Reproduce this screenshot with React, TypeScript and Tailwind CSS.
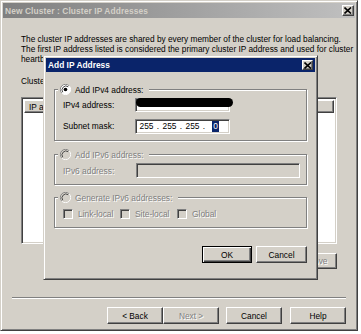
const raised =
  'border border-t-white border-l-white border-r-[#404040] border-b-[#404040] shadow-[inset_-1px_-1px_0_#808080]';
const sunken =
  'border border-t-[#808080] border-l-[#808080] border-r-white border-b-white shadow-[inset_1px_1px_0_#404040,inset_-1px_-1px_0_#d4d0c8]';
const etched = 'border border-[#808080] shadow-[inset_1px_1px_0_#fff,1px_1px_0_#fff]';
const disabledText = 'text-[#808080] [text-shadow:1px_1px_0_#fff]';

function CloseBtn({ className }: { className: string }) {
  return (
    <div className={`${raised} bg-[#d4d0c8] flex items-center justify-center ${className}`}>
      <svg width="8" height="7" viewBox="0 0 8 7">
        <path d="M0.5 0.5 L7 6.5 M7 0.5 L0.5 6.5" stroke="#000" strokeWidth="1.6" />
      </svg>
    </div>
  );
}

function Radio({ checked, disabled }: { checked?: boolean; disabled?: boolean }) {
  return (
    <svg width="11" height="11" viewBox="0 0 12 12" className="shrink-0">
      <circle cx="6" cy="6" r="5.5" fill={disabled ? '#d4d0c8' : '#fff'} />
      <path d="M10 2 A5.5 5.5 0 0 0 2 10" stroke="#808080" strokeWidth="1" fill="none" />
      <path d="M9 3 A4.3 4.3 0 0 0 3 9" stroke="#404040" strokeWidth="1" fill="none" />
      <path d="M2 10 A5.5 5.5 0 0 0 10 2" stroke="#fff" strokeWidth="1" fill="none" />
      {checked && <circle cx="6" cy="6" r="2" fill="#000" />}
    </svg>
  );
}

function Check({ label }: { label: string }) {
  return (
    <div className="w-[57px] flex items-center gap-[5px]">
      <div className={`${sunken} w-[10px] h-[10px] bg-[#d4d0c8] shrink-0`} />
      <span className={disabledText}>{label}</span>
    </div>
  );
}

function Legend({ children, checked, disabled }: { children: string; checked?: boolean; disabled?: boolean }) {
  return (
    <div className="absolute left-[3px] top-[-6px] h-[11px] pl-[2px] pr-[6px] bg-[#d4d0c8] flex items-center gap-[4px]">
      <Radio checked={checked} disabled={disabled} />
      <span className={disabled ? disabledText : 'text-black'}>{children}</span>
    </div>
  );
}

export default function App() {
  return (
    <div className="w-[361px] h-[334px] bg-white font-['Liberation_Sans',Arial,sans-serif] text-[8.3px] leading-[10px] text-black">
      {/* Wizard window */}
      <div className="relative w-[358px] h-[331px] bg-[#d4d0c8] border border-t-[#d4d0c8] border-l-[#d4d0c8] border-r-[#404040] border-b-[#404040] shadow-[inset_1px_1px_0_#fff,inset_-1px_-1px_0_#808080] p-[2px] flex flex-col">
        <div className="h-[15px] bg-gradient-to-r from-[#808080] to-[#c0c0c0] flex items-center justify-between pl-[2px] pr-[1px] shrink-0">
          <span className="font-bold text-[8.4px] text-[#d4d0c8] tracking-[0.1px]">New Cluster : Cluster IP Addresses</span>
          <CloseBtn className="w-[12px] h-[11px]" />
        </div>

        <div className="flex flex-col px-[9px] pt-[16px]">
          <div className="px-[9px] flex flex-col">
            <p className="w-[330px] whitespace-nowrap">
              The cluster IP addresses are shared by every member of the cluster for load balancing.
              <br />
              The first IP address listed is considered the primary cluster IP address and used for cluster
              <br />
              heartbeat traffic.
            </p>
            <div className="mt-[12px]">Cluster IP addresses:</div>
            <div className={`${sunken} mt-[11px] h-[147px] bg-white p-[2px]`}>
              <div className="flex h-[13px]">
                <div className={`${raised} bg-[#d4d0c8] w-[150px] pl-[4px] flex items-center`}>IP address</div>
                <div className={`${raised} bg-[#d4d0c8] flex-1 pl-[4px] flex items-center`}>Subnet mask</div>
              </div>
            </div>
            <div className="mt-[9px] flex justify-end gap-[6px]">
              <div className={`${raised} bg-[#d4d0c8] w-[50px] h-[16px] flex items-center justify-center`}>Add...</div>
              <div className={`${raised} bg-[#d4d0c8] w-[50px] h-[16px] flex items-center justify-center ${disabledText}`}>Edit...</div>
              <div className={`${raised} bg-[#d4d0c8] w-[50px] h-[16px] flex items-center justify-center ${disabledText}`}>Remove</div>
            </div>
          </div>

          <div className="mt-[28px] h-[2px] border-t border-t-[#808080] border-b border-b-white" />

          <div className="mt-[8px] flex justify-end">
            <div className={`${raised} bg-[#d4d0c8] w-[56px] h-[17px] flex items-center justify-center`}>&lt; Back</div>
            <div className={`${raised} bg-[#d4d0c8] w-[56px] h-[17px] flex items-center justify-center ${disabledText}`}>Next &gt;</div>
            <div className={`${raised} bg-[#d4d0c8] w-[56px] h-[17px] ml-[7px] flex items-center justify-center`}>Cancel</div>
            <div className={`${raised} bg-[#d4d0c8] w-[56px] h-[17px] ml-[8px] flex items-center justify-center`}>Help</div>
          </div>
        </div>

        {/* Add IP Address dialog */}
        <div className="absolute left-[42px] top-[54px] w-[275px] h-[225px] bg-[#d4d0c8] border border-t-[#d4d0c8] border-l-[#d4d0c8] border-r-[#404040] border-b-[#404040] shadow-[inset_1px_1px_0_#fff,inset_-1px_-1px_0_#808080] p-[1px] flex flex-col text-[8.4px]">
          <div className="mx-[1px] mt-[1px] h-[14px] bg-[#0a246a] flex items-center justify-between pl-[2px] pr-[2px] shrink-0">
            <span className="font-bold text-white">Add IP Address</span>
            <CloseBtn className="w-[11px] h-[10px]" />
          </div>

          <div className="flex flex-col pl-[9px] pr-[9px]">
            {/* IPv4 group */}
            <div className={`relative ${etched} mt-[17px] h-[52px] pl-[8px] pt-[8px] flex flex-col gap-[7px]`}>
              <Legend checked>Add IPv4 address:</Legend>
              <div className="flex items-center h-[14px]">
                <span className="w-[72px]">IPv4 address:</span>
                <div className={`${sunken} relative w-[95px] h-[14px] bg-white`}>
                  <div className="absolute left-[0px] top-[-1px] w-[97px] h-[9px] rounded-full bg-black" />
                </div>
              </div>
              <div className="flex items-center h-[14px]">
                <span className="w-[72px]">Subnet mask:</span>
                <div className={`${sunken} w-[95px] h-[15px] bg-white flex items-center pl-[2px]`}>
                  <span className="w-[17px] text-center">255</span>
                  <span className="w-[6px] text-center">.</span>
                  <span className="w-[17px] text-center">255</span>
                  <span className="w-[6px] text-center">.</span>
                  <span className="w-[17px] text-center">255</span>
                  <span className="w-[6px] text-center">.</span>
                  <span className="w-[17px] flex justify-center">
                    <span className="bg-[#0a246a] text-white px-[1px] leading-[11px]">0</span>
                  </span>
                </div>
              </div>
            </div>

            {/* IPv6 group */}
            <div className={`relative ${etched} mt-[13px] h-[31px] pl-[8px] pt-[8px] flex`}>
              <Legend disabled>Add IPv6 address:</Legend>
              <div className="flex items-center h-[15px]">
                <span className={`w-[73px] ${disabledText}`}>IPv6 address:</span>
                <div className={`${sunken} w-[164px] h-[15px] bg-[#d4d0c8]`} />
              </div>
            </div>

            {/* Generate group */}
            <div className={`relative ${etched} mt-[12px] h-[31px] pl-[8px] pt-[11px] flex`}>
              <Legend disabled>Generate IPv6 addresses:</Legend>
              <div className="flex items-center h-[10px]">
                <Check label="Link-local" />
                <Check label="Site-local" />
                <Check label="Global" />
              </div>
            </div>

            <div className="mt-[18px] flex justify-end gap-[4px]">
              <div className="w-[50px] h-[17px] border border-black bg-[#d4d0c8] shadow-[inset_1px_1px_0_#fff,inset_-1px_-1px_0_#404040,inset_-2px_-2px_0_#808080] flex items-center justify-center">
                OK
              </div>
              <div className={`${raised} bg-[#d4d0c8] w-[51px] h-[17px] flex items-center justify-center`}>Cancel</div>
            </div>
          </div>
        </div>
      </div>
    </div>
  );
}
